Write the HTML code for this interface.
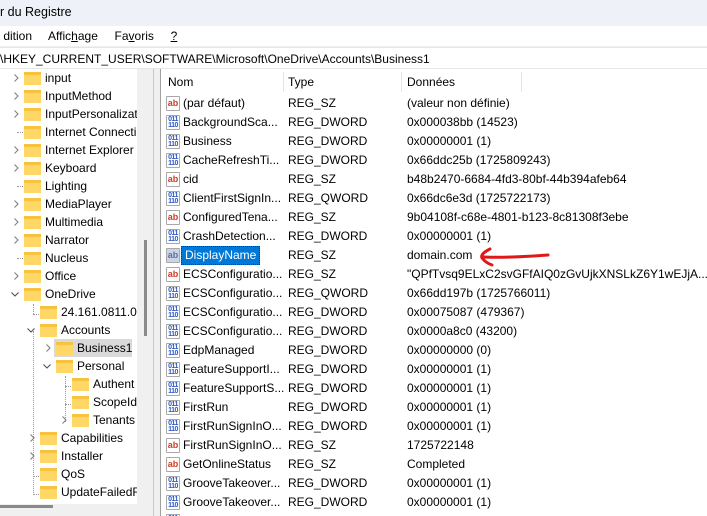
<!DOCTYPE html><html><head><meta charset="utf-8"><style>
*{margin:0;padding:0;box-sizing:border-box}
body{width:707px;height:516px;overflow:hidden;background:#f0f0f0;font-family:"Liberation Sans",sans-serif;font-size:12px;color:#000;position:relative}
.abs{position:absolute;white-space:nowrap}
#title{left:0;top:0;width:707px;height:26px;background:#eef2f8;font-size:12.5px;line-height:24px}
#menu{left:0;top:26px;width:707px;height:20px;background:#fff;line-height:20px}
#addr{left:0;top:47px;width:707px;height:22px;background:#fff;line-height:22px;border-top:1px solid #e6e6e6;border-bottom:1px solid #e6e6e6}
#tree{left:0;top:69px;width:137px;height:435px;background:#fff;overflow:hidden}
#list{left:160px;top:69px;width:547px;height:447px;background:#fff;border-left:1px solid #a0a0a0;overflow:hidden}
.t{position:absolute;height:18px;line-height:18px}
.fold{position:absolute;width:17px;height:13px;background:#f7c33f;top:3px}
.fold:after{content:"";position:absolute;left:0;top:3px;width:17px;height:10px;background:#ffd767}
.chev{position:absolute;top:5px;width:8px;height:8px}
.r{position:absolute;left:0;height:19px;line-height:19px;width:547px}
.ic{position:absolute;left:5px;top:2px;width:14px;height:15px;border:1px solid #a9a9a9;background:#fff;font-size:9px;font-weight:bold;line-height:12px;text-align:center;border-radius:1px}
.ab{color:#d13a1f}
.bin{color:#2a55c4;font-size:7px;line-height:6px;letter-spacing:-0.5px;padding-top:1px}
.n{position:absolute;left:22px}
.ty{position:absolute;left:127px}
.d{position:absolute;left:246px}
.dl{position:absolute;border-left:1px dotted #999}
.dh{position:absolute;border-top:1px dotted #999;height:0}
</style></head><body>
<svg width="0" height="0" style="position:absolute"><defs>
<symbol id="cr" viewBox="0 0 8 8"><path d="M2.5 0.5 L6 4 L2.5 7.5" stroke="#808080" stroke-width="1.1" fill="none"/></symbol>
<symbol id="cd" viewBox="0 0 8 8"><path d="M0.5 2.5 L4 6 L7.5 2.5" stroke="#505050" stroke-width="1.1" fill="none"/></symbol>
</defs></svg>
<div class="abs" id="title">r du Registre</div>
<div class="abs" id="menu">&nbsp;dition &nbsp;&nbsp;&nbsp; Affic<u>h</u>age &nbsp;&nbsp;&nbsp; Fa<u>v</u>oris &nbsp;&nbsp;&nbsp; <u>?</u></div>
<div class="abs" id="addr">\HKEY_CURRENT_USER\SOFTWARE\Microsoft\OneDrive\Accounts\Business1</div>
<div class="abs" id="tree">
<div class="dh" style="left:17px;top:63px;width:6px"></div>
<div class="dh" style="left:17px;top:117px;width:6px"></div>
<div class="dh" style="left:17px;top:189px;width:6px"></div>
<div class="dl" style="left:33px;top:235px;height:10px"></div><div class="dh" style="left:33px;top:245px;width:6px"></div>
<div class="dl" style="left:65px;top:307px;height:46px"></div><div class="dh" style="left:65px;top:317px;width:6px"></div><div class="dh" style="left:65px;top:335px;width:6px"></div>
<div class="dl" style="left:33px;top:262px;height:164px"></div><div class="dh" style="left:33px;top:407px;width:6px"></div><div class="dh" style="left:33px;top:425px;width:6px"></div>
<div class="t" style="top:0px"><svg class="chev" style="left:12px"><use href="#cr"/></svg><span class="fold" style="left:24px"></span><span style="position:absolute;left:45px">input</span></div>
<div class="t" style="top:18px"><svg class="chev" style="left:12px"><use href="#cr"/></svg><span class="fold" style="left:24px"></span><span style="position:absolute;left:45px">InputMethod</span></div>
<div class="t" style="top:36px"><svg class="chev" style="left:12px"><use href="#cr"/></svg><span class="fold" style="left:24px"></span><span style="position:absolute;left:45px">InputPersonalizat</span></div>
<div class="t" style="top:54px"><span class="fold" style="left:24px"></span><span style="position:absolute;left:45px">Internet Connecti</span></div>
<div class="t" style="top:72px"><svg class="chev" style="left:12px"><use href="#cr"/></svg><span class="fold" style="left:24px"></span><span style="position:absolute;left:45px">Internet Explorer</span></div>
<div class="t" style="top:90px"><svg class="chev" style="left:12px"><use href="#cr"/></svg><span class="fold" style="left:24px"></span><span style="position:absolute;left:45px">Keyboard</span></div>
<div class="t" style="top:108px"><span class="fold" style="left:24px"></span><span style="position:absolute;left:45px">Lighting</span></div>
<div class="t" style="top:126px"><svg class="chev" style="left:12px"><use href="#cr"/></svg><span class="fold" style="left:24px"></span><span style="position:absolute;left:45px">MediaPlayer</span></div>
<div class="t" style="top:144px"><svg class="chev" style="left:12px"><use href="#cr"/></svg><span class="fold" style="left:24px"></span><span style="position:absolute;left:45px">Multimedia</span></div>
<div class="t" style="top:162px"><svg class="chev" style="left:12px"><use href="#cr"/></svg><span class="fold" style="left:24px"></span><span style="position:absolute;left:45px">Narrator</span></div>
<div class="t" style="top:180px"><span class="fold" style="left:24px"></span><span style="position:absolute;left:45px">Nucleus</span></div>
<div class="t" style="top:198px"><svg class="chev" style="left:12px"><use href="#cr"/></svg><span class="fold" style="left:24px"></span><span style="position:absolute;left:45px">Office</span></div>
<div class="t" style="top:216px"><svg class="chev" style="left:11px"><use href="#cd"/></svg><span class="fold" style="left:24px"></span><span style="position:absolute;left:45px">OneDrive</span></div>
<div class="t" style="top:234px"><span class="fold" style="left:40px"></span><span style="position:absolute;left:61px">24.161.0811.00</span></div>
<div class="t" style="top:252px"><svg class="chev" style="left:27px"><use href="#cd"/></svg><span class="fold" style="left:40px"></span><span style="position:absolute;left:61px">Accounts</span></div>
<div class="t" style="top:270px;left:54px;width:78px;background:#d9d9d9"></div>
<div class="t" style="top:270px"><svg class="chev" style="left:44px"><use href="#cr"/></svg><span class="fold" style="left:56px"></span><span style="position:absolute;left:77px">Business1</span></div>
<div class="t" style="top:288px"><svg class="chev" style="left:43px"><use href="#cd"/></svg><span class="fold" style="left:56px"></span><span style="position:absolute;left:77px">Personal</span></div>
<div class="t" style="top:306px"><span class="fold" style="left:72px"></span><span style="position:absolute;left:93px">Authent</span></div>
<div class="t" style="top:324px"><span class="fold" style="left:72px"></span><span style="position:absolute;left:93px">ScopeId</span></div>
<div class="t" style="top:342px"><svg class="chev" style="left:60px"><use href="#cr"/></svg><span class="fold" style="left:72px"></span><span style="position:absolute;left:93px">Tenants</span></div>
<div class="t" style="top:360px"><svg class="chev" style="left:28px"><use href="#cr"/></svg><span class="fold" style="left:40px"></span><span style="position:absolute;left:61px">Capabilities</span></div>
<div class="t" style="top:378px"><svg class="chev" style="left:28px"><use href="#cr"/></svg><span class="fold" style="left:40px"></span><span style="position:absolute;left:61px">Installer</span></div>
<div class="t" style="top:396px"><span class="fold" style="left:40px"></span><span style="position:absolute;left:61px">QoS</span></div>
<div class="t" style="top:414px"><span class="fold" style="left:40px"></span><span style="position:absolute;left:61px">UpdateFailedR</span></div>
</div>
<div class="abs" style="left:144px;top:240px;width:3px;height:96px;background:#8a8a8a"></div>
<div class="abs" style="left:0;top:505px;width:53px;height:3px;background:#8a8a8a"></div>
<div class="abs" style="left:153px;top:69px;width:1px;height:447px;background:#c8c8c8"></div>
<div class="abs" id="list">
<div class="r" style="top:3px;height:20px;line-height:20px"><span style="position:absolute;left:7px">Nom</span><span style="position:absolute;left:127px">Type</span><span style="position:absolute;left:246px">Données</span></div>
<div class="abs" style="left:122px;top:3px;width:1px;height:20px;background:#e5e5e5"></div>
<div class="abs" style="left:240px;top:3px;width:1px;height:20px;background:#e5e5e5"></div>
<div class="abs" style="left:360px;top:3px;width:1px;height:20px;background:#e5e5e5"></div>
<div class="r" style="top:25px"><span class="ic ab">ab</span><span class="n">(par défaut)</span><span class="ty">REG_SZ</span><span class="d">(valeur non définie)</span></div>
<div class="r" style="top:44px"><span class="ic bin">011<br>110</span><span class="n">BackgroundSca...</span><span class="ty">REG_DWORD</span><span class="d">0x000038bb (14523)</span></div>
<div class="r" style="top:63px"><span class="ic bin">011<br>110</span><span class="n">Business</span><span class="ty">REG_DWORD</span><span class="d">0x00000001 (1)</span></div>
<div class="r" style="top:82px"><span class="ic bin">011<br>110</span><span class="n">CacheRefreshTi...</span><span class="ty">REG_DWORD</span><span class="d">0x66ddc25b (1725809243)</span></div>
<div class="r" style="top:101px"><span class="ic ab">ab</span><span class="n">cid</span><span class="ty">REG_SZ</span><span class="d">b48b2470-6684-4fd3-80bf-44b394afeb64</span></div>
<div class="r" style="top:120px"><span class="ic bin">011<br>110</span><span class="n">ClientFirstSignIn...</span><span class="ty">REG_QWORD</span><span class="d">0x66dc6e3d (1725722173)</span></div>
<div class="r" style="top:139px"><span class="ic ab">ab</span><span class="n">ConfiguredTena...</span><span class="ty">REG_SZ</span><span class="d">9b04108f-c68e-4801-b123-8c81308f3ebe</span></div>
<div class="r" style="top:158px"><span class="ic bin">011<br>110</span><span class="n">CrashDetection...</span><span class="ty">REG_DWORD</span><span class="d">0x00000001 (1)</span></div>
<div class="r" style="top:177px"><span class="ic ab" style="background:#c9d6ea;color:#6a6a9a">ab</span><span class="n" style="left:20px;background:#0078d7;color:#fff;padding:0 3px;border:1px dotted #333;height:19px;line-height:17px">DisplayName</span><span class="ty">REG_SZ</span><span class="d">domain.com</span></div>
<div class="r" style="top:196px"><span class="ic ab">ab</span><span class="n">ECSConfiguratio...</span><span class="ty">REG_SZ</span><span class="d">"QPfTvsq9ELxC2svGFfAIQ0zGvUjkXNSLkZ6Y1wEJjA...</span></div>
<div class="r" style="top:215px"><span class="ic bin">011<br>110</span><span class="n">ECSConfiguratio...</span><span class="ty">REG_QWORD</span><span class="d">0x66dd197b (1725766011)</span></div>
<div class="r" style="top:234px"><span class="ic bin">011<br>110</span><span class="n">ECSConfiguratio...</span><span class="ty">REG_DWORD</span><span class="d">0x00075087 (479367)</span></div>
<div class="r" style="top:253px"><span class="ic bin">011<br>110</span><span class="n">ECSConfiguratio...</span><span class="ty">REG_DWORD</span><span class="d">0x0000a8c0 (43200)</span></div>
<div class="r" style="top:272px"><span class="ic bin">011<br>110</span><span class="n">EdpManaged</span><span class="ty">REG_DWORD</span><span class="d">0x00000000 (0)</span></div>
<div class="r" style="top:291px"><span class="ic bin">011<br>110</span><span class="n">FeatureSupportI...</span><span class="ty">REG_DWORD</span><span class="d">0x00000001 (1)</span></div>
<div class="r" style="top:310px"><span class="ic bin">011<br>110</span><span class="n">FeatureSupportS...</span><span class="ty">REG_DWORD</span><span class="d">0x00000001 (1)</span></div>
<div class="r" style="top:329px"><span class="ic bin">011<br>110</span><span class="n">FirstRun</span><span class="ty">REG_DWORD</span><span class="d">0x00000001 (1)</span></div>
<div class="r" style="top:348px"><span class="ic bin">011<br>110</span><span class="n">FirstRunSignInO...</span><span class="ty">REG_DWORD</span><span class="d">0x00000001 (1)</span></div>
<div class="r" style="top:367px"><span class="ic ab">ab</span><span class="n">FirstRunSignInO...</span><span class="ty">REG_SZ</span><span class="d">1725722148</span></div>
<div class="r" style="top:386px"><span class="ic ab">ab</span><span class="n">GetOnlineStatus</span><span class="ty">REG_SZ</span><span class="d">Completed</span></div>
<div class="r" style="top:405px"><span class="ic bin">011<br>110</span><span class="n">GrooveTakeover...</span><span class="ty">REG_DWORD</span><span class="d">0x00000001 (1)</span></div>
<div class="r" style="top:424px"><span class="ic bin">011<br>110</span><span class="n">GrooveTakeover...</span><span class="ty">REG_DWORD</span><span class="d">0x00000001 (1)</span></div>
<div class="r" style="top:443px"><span class="ic bin">011<br>110</span></div>
</div>
<svg class="abs" style="left:478px;top:246px" width="75" height="22" viewBox="0 0 75 22"><path d="M12 3 Q2 8 4 12 Q8 17 14 19 M6 11 Q30 12 70 9" stroke="#e01818" stroke-width="3" fill="none" stroke-linecap="round"/></svg>
</body></html>
